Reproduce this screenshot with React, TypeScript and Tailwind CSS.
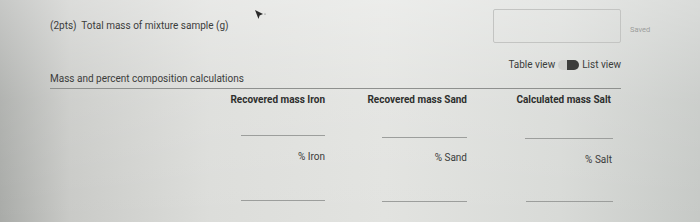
const font = "font-['Roboto','Liberation_Sans',Arial,sans-serif]";

function Blank({ className = "" }: { className?: string }) {
  return <div className={`h-px w-[84px] justify-self-end bg-[#9c9e9c] ${className}`} />;
}

function Toggle() {
  return (
    <span className="mx-[3px] inline-flex h-[10px] w-[21px] items-center rounded-full bg-[#cfd0ce]">
      <span className="ml-auto h-[10px] w-[12px] rounded-l-[3px] rounded-r-full bg-[#3c3d3c]" />
    </span>
  );
}

function Cursor() {
  return (
    <svg className="absolute left-[254px] top-[9px]" width="12" height="12" viewBox="0 0 12 12">
      <path d="M1 1 L4.5 10 L5.6 6.4 L9 5 Z" fill="#2a2a2a" />
      <circle cx="11" cy="5" r="0.6" fill="#666" />
    </svg>
  );
}

export default function App() {
  return (
    <div
      className={`relative h-[222px] w-[700px] overflow-hidden bg-[linear-gradient(90deg,#a9aba8_0%,#c9cac7_10%,#dcddda_30%,#e2e3e0_55%,#d8dad7_80%,#c6c9c6_100%)] text-[#3b3c3b] ${font}`}
    >
      <div className="absolute inset-0 bg-[linear-gradient(180deg,rgba(255,255,255,0.35)_0%,rgba(255,255,255,0.1)_45%,rgba(255,255,255,0)_100%)]" />
      <Cursor />
      <div className="relative pl-[50px]">
        <div className="flex w-[604px] items-start">
          <p className="pt-[20px] text-[10px] leading-[12px]">(2pts)&nbsp; Total mass of mixture sample (g)</p>
          <div className="ml-auto mt-[9px] h-[34px] w-[128px] rounded-[2px] border border-[#c3c4c2]" />
          <span className="ml-[9px] mt-[24px] w-[24px] text-[7.5px] text-[#9c9e9c]">Saved</span>
        </div>

        <div className="mt-[16px] flex w-[571px] items-center justify-end text-[10px] leading-[11px]">
          <span>Table view</span>
          <Toggle />
          <span>List view</span>
        </div>

        <div className="mt-[3px] w-[571px] border-b border-[#8e908e] pb-[4px] text-[10px] leading-[11px]">
          Mass and percent composition calculations
        </div>

        <div className="grid grid-cols-[170px_105px_142px_146px] text-[10px] leading-[11px]">
          <div />
          <div className="mt-[5px] justify-self-end font-bold text-[#2e2f2e]">Recovered mass Iron</div>
          <div className="mt-[5px] justify-self-end font-bold text-[#2e2f2e]">Recovered mass Sand</div>
          <div className="mt-[5px] justify-self-end pr-[2px] font-bold text-[#2e2f2e]">Calculated mass Salt</div>

          <div />
          <Blank className="mt-[30px] w-[82px]" />
          <Blank className="mt-[32px] w-[85px]" />
          <Blank className="mt-[33px] w-[88px]" />

          <div />
          <div className="mt-[12px] justify-self-end">% Iron</div>
          <div className="mt-[13px] justify-self-end">% Sand</div>
          <div className="mt-[15px] justify-self-end pr-[1px]">% Salt</div>

          <div />
          <Blank className="mt-[35px] w-[82px]" />
          <Blank className="mt-[36px] w-[85px]" />
          <Blank className="mt-[36px] w-[87px]" />
        </div>
      </div>
    </div>
  );
}
